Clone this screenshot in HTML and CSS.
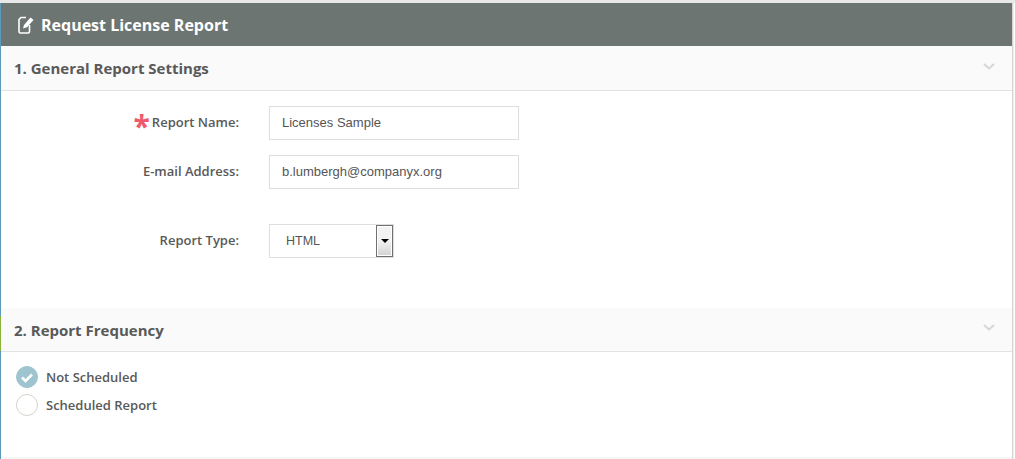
FILE: index.html
```html
<!DOCTYPE html>
<html lang="en">
<head>
    <meta charset="UTF-8" />
    <title>Request License Report</title>
    <link rel="stylesheet" href="styles.css">
</head>
<body>
    <div class="panel">
        <div class="panel-title">
            <svg class="title-icon" width="16" height="18" viewBox="0 0 16 18">
                <path d="M8 1.5H3L1 3.5V15.5Q1 17 2.5 17H10Q11.5 17 11.5 15.5V9" fill="none" stroke="#fff" stroke-width="1.6"/>
                <path d="M5 12.5L6 9L12.5 1.5L15.5 4L9 11.2Z" fill="#fff"/>
            </svg>
            <h1>Request License Report</h1>
        </div>

        <!-- GENERAL SETTINGS -->
        <div class="section-head">
            <h2>1. General Report Settings</h2>
            <svg class="chevron" width="12" height="7" viewBox="0 0 12 7"><path d="M1 1L6 5.5L11 1" fill="none" stroke="#d4d6da" stroke-width="2"/></svg>
        </div>
        <div class="settings">
            <div class="row">
                <label class="field-label"><span class="star">*</span>Report Name:</label>
                <input class="text-input" type="text" value="Licenses Sample">
            </div>
            <div class="row">
                <label class="field-label">E-mail Address:</label>
                <input class="text-input" type="text" value="b.lumbergh@companyx.org">
            </div>
            <div class="row row-type">
                <label class="field-label">Report Type:</label>
                <div class="select-box">
                    <span>HTML</span>
                    <span class="select-btn"><i class="arrow"></i></span>
                </div>
            </div>
        </div>

        <!-- FREQUENCY -->
        <div class="section-head section-green">
            <h2>2. Report Frequency</h2>
            <svg class="chevron" width="12" height="7" viewBox="0 0 12 7"><path d="M1 1L6 5.5L11 1" fill="none" stroke="#d4d6da" stroke-width="2"/></svg>
        </div>
        <div class="frequency">
            <div class="radio-row">
                <span class="radio radio-on">
                    <svg width="14" height="11" viewBox="0 0 14 11"><path d="M2 5.5L5.5 9L12 2.5" fill="none" stroke="#fff" stroke-width="2.6"/></svg>
                </span>
                Not Scheduled
            </div>
            <div class="radio-row">
                <span class="radio"></span>
                Scheduled Report
            </div>
        </div>
        <div class="panel-bottom"></div>
    </div>
</body>
</html>
```

FILE: styles.css
```css
* {
    margin: 0;
    padding: 0;
    box-sizing: border-box;
}

html, body {
    height: 459px;
    overflow: hidden;
}

body {
    background: #fff;
    font-family: 'Open Sans', sans-serif;
    color: #595959;
}

body::before {
    content: "";
    display: block;
    height: 3px;
    background: #e8e8e8;
}

.panel {
    width: 1013px;
    height: 456px;
    border-left: 1px solid #5b9ab8;
    border-right: 1px solid #d5d5d5;
    box-shadow: 1px 0 0 #eee;
    display: flex;
    flex-direction: column;
}

.panel-title {
    height: 43px;
    background: #6d7573;
    color: #fff;
    display: flex;
    align-items: center;
    padding-left: 17px;
    gap: 7px;
}

.panel-title h1 {
    font-size: 16px;
    font-weight: 700;
}

.section-head {
    height: 45px;
    background: #fafafa;
    border-bottom: 1px solid #e3e3e3;
    display: flex;
    align-items: center;
    justify-content: space-between;
    padding: 0 17px 0 13px;
}

.section-head h2 {
    font-size: 15px;
    font-weight: 700;
    color: #595959;
}

.chevron {
    margin-top: -4px;
}

.section-green {
    height: 44px;
    position: relative;
}

.section-green::before {
    content: "";
    position: absolute;
    left: -1px;
    top: 8px;
    bottom: 0;
    width: 1px;
    background: #8ab33c;
}

.settings {
    height: 217px;
    padding-top: 15px;
}

.row {
    display: flex;
    align-items: center;
    margin-bottom: 15px;
}

.row-type {
    margin-top: 35px;
}

.field-label {
    width: 238px;
    text-align: right;
    font-size: 13px;
    font-weight: 600;
    color: #595959;
    margin-right: 30px;
    padding-bottom: 2px;
}

.star {
    color: #ef5a6b;
    font-size: 30px;
    font-weight: 700;
    line-height: 12px;
    vertical-align: -10px;
    margin-right: 2px;
}

.text-input {
    width: 250px;
    height: 34px;
    border: 1px solid #dedede;
    padding: 0 12px 2px;
    font-family: 'Liberation Sans', Arial, sans-serif;
    font-size: 13px;
    color: #555;
    background: #fff;
    outline: none;
}

.select-box {
    width: 125px;
    height: 34px;
    border: 1px solid #dedede;
    display: flex;
    align-items: center;
    justify-content: space-between;
    padding-left: 16px;
    font-family: 'Liberation Sans', Arial, sans-serif;
    font-size: 12.5px;
    color: #555;
}

.select-btn {
    width: 17px;
    height: 32px;
    border: 1px solid #707070;
    background: linear-gradient(#f2f2f2 50%, #d2d2d2);
    display: flex;
    align-items: center;
    justify-content: center;
    box-shadow: inset 0 0 0 1px #fff;
}

.arrow {
    border-left: 4px solid transparent;
    border-right: 4px solid transparent;
    border-top: 4px solid #000;
}

.frequency {
    flex: 1;
    padding: 11px 0 0 15px;
}

.radio-row {
    display: flex;
    align-items: center;
    gap: 8px;
    height: 28px;
    font-size: 13px;
    font-weight: 600;
    color: #595959;
}

.radio {
    width: 22px;
    height: 22px;
    border-radius: 50%;
    border: 1px solid #d6d3cc;
    background: #fff;
    display: flex;
    align-items: center;
    justify-content: center;
}

.radio-on {
    background: #9ec4d0;
    border-color: #9ec4d0;
}

.panel-bottom {
    height: 2px;
    background: #f6f6f6;
}
```
